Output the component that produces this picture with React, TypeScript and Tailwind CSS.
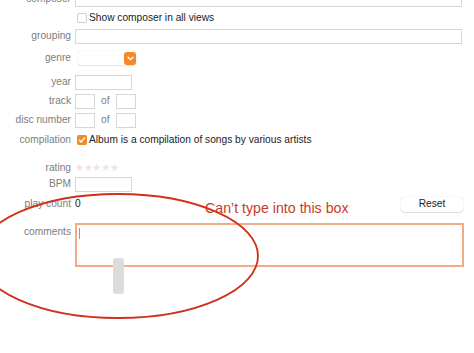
import React from "react";

function Label({ children, top = false }: { children: React.ReactNode; top?: boolean }) {
  return (
    <div className={`w-[71px] shrink-0 text-right text-[10.2px] leading-none text-[#7d7d7d] ${top ? "self-start pt-[4px]" : ""}`}>
      {children}
    </div>
  );
}

function Box({ className = "" }: { className?: string }) {
  return <div className={`border border-[#d6d6d6] bg-white ${className}`} />;
}

function Row({ className = "", children }: { className?: string; children: React.ReactNode }) {
  return <div className={`flex items-center gap-[4px] ${className}`}>{children}</div>;
}

export default function App() {
  return (
    <div className="relative h-[353px] w-[474px] overflow-hidden bg-white font-['Liberation_Sans',sans-serif] text-[#222]">
      <div className="flex flex-col">
        <Row className="-mt-[8px] h-[15px]">
          <Label>composer</Label>
          <Box className="h-[15px] w-[387px]" />
        </Row>

        <Row className="mt-[5px] h-[12px]">
          <div className="w-[71px] shrink-0" />
          <div className="ml-[2px] h-[10px] w-[10px] rounded-[2px] border border-[#cfcfcf] bg-white" />
          <span className="-ml-[2px] text-[10.2px] leading-none">Show composer in all views</span>
        </Row>

        <Row className="mt-[5px] h-[15px]">
          <Label>grouping</Label>
          <Box className="h-[15px] w-[387px]" />
        </Row>

        <Row className="mt-[7px] h-[14px]">
          <Label>genre</Label>
          <div className="ml-[3px] flex h-[14px] w-[58px] items-center justify-end rounded-[3px] bg-white shadow-[0_0_1px_rgba(0,0,0,0.25),0_1px_1px_rgba(0,0,0,0.08)]">
            <div className="flex h-[13px] w-[12px] items-center justify-center rounded-[3px] bg-[#f2892a]">
              <svg width="7" height="5" viewBox="0 0 7 5">
                <path d="M1 1.2 L3.5 3.6 L6 1.2" stroke="white" strokeWidth="1.3" fill="none" strokeLinecap="round" />
              </svg>
            </div>
          </div>
        </Row>

        <Row className="mt-[10px] h-[15px]">
          <Label>year</Label>
          <Box className="h-[15px] w-[57px]" />
        </Row>

        <Row className="mt-[4px] h-[15px]">
          <Label>track</Label>
          <Box className="h-[15px] w-[20px]" />
          <span className="mx-[2px] text-[10.2px] leading-none text-[#7d7d7d]">of</span>
          <Box className="h-[15px] w-[20px]" />
        </Row>

        <Row className="mt-[4px] h-[15px]">
          <Label>disc number</Label>
          <Box className="h-[15px] w-[20px]" />
          <span className="mx-[2px] text-[10.2px] leading-none text-[#7d7d7d]">of</span>
          <Box className="h-[15px] w-[20px]" />
        </Row>

        <Row className="mt-[6px] h-[12px]">
          <Label>compilation</Label>
          <div className="ml-[2px] flex h-[10px] w-[10px] items-center justify-center rounded-[2px] bg-[#f08a2a]">
            <svg width="8" height="8" viewBox="0 0 8 8">
              <path d="M1.5 4.2 L3.2 5.9 L6.5 2" stroke="white" strokeWidth="1.4" fill="none" strokeLinecap="round" />
            </svg>
          </div>
          <span className="-ml-[2px] text-[10.2px] leading-none">Album is a compilation of songs by various artists</span>
        </Row>

        <Row className="mt-[16px] h-[12px]">
          <Label>rating</Label>
          <span className="text-[10px] leading-none tracking-[-0.3px] text-[#f0e3de]">★★★★★</span>
        </Row>

        <Row className="mt-[3px] h-[15px]">
          <Label>BPM</Label>
          <Box className="h-[15px] w-[57px]" />
        </Row>

        <Row className="mt-[5px] h-[15px]">
          <Label>play count</Label>
          <span className="text-[10.2px] leading-none">0</span>
          <div className="flex-1" />
          <div className="mr-[11px] flex h-[15px] w-[62px] items-center justify-center rounded-[4px] bg-white text-[10.2px] leading-none shadow-[0_0_1px_rgba(0,0,0,0.3),0_1px_1px_rgba(0,0,0,0.1)]">
            Reset
          </div>
        </Row>

        <Row className="mt-[11px] h-[44px]">
          <Label top>comments</Label>
          <div className="h-[44px] w-[389px] border-2 border-[#f1ab86] bg-white pl-[2px] pt-[3px]">
            <div className="h-[11px] w-[1px] bg-[#e8891f]" />
          </div>
        </Row>
      </div>

      {/* annotation overlay */}
      <div className="absolute left-[205px] top-[201px] text-[14.2px] leading-none text-[#cc3a25]">
        Can’t type into this box
      </div>
      <div className="absolute left-[113px] top-[258px] h-[36px] w-[11px] rounded-[3px] bg-[#dcdcdc]" />
      <svg className="absolute left-0 top-0" width="474" height="353" viewBox="0 0 474 353">
        <ellipse cx="118" cy="256" rx="140" ry="62" fill="none" stroke="#d0301c" strokeWidth="1.8" />
      </svg>
    </div>
  );
}
